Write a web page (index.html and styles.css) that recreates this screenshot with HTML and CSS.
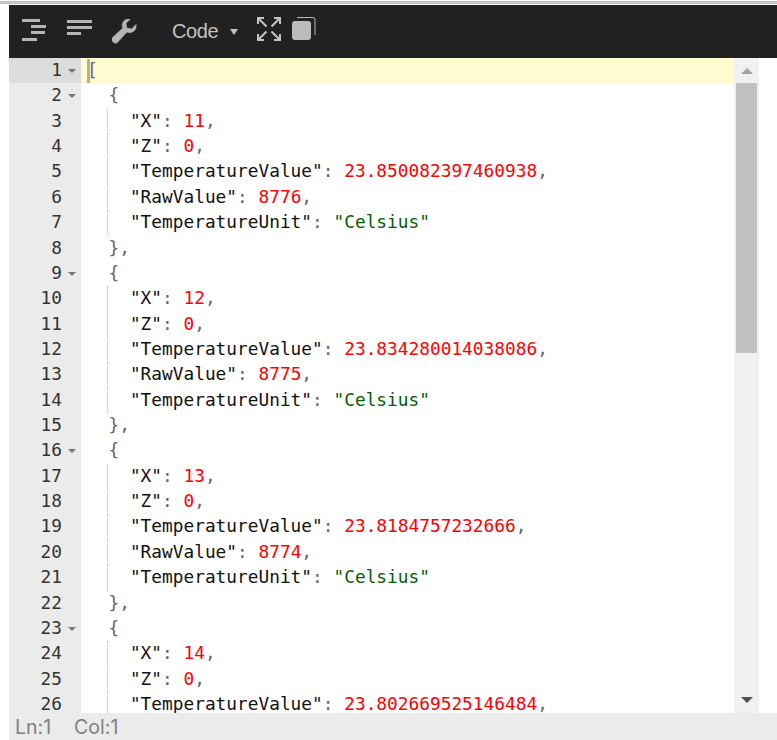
FILE: index.html
```html
<!DOCTYPE html>
<html lang="en">
<head>
    <meta charset="UTF-8">
    <title>JSON Editor</title>
    <link rel="stylesheet" href="styles.css">
</head>
<body>
    <div class="top-rule"></div>

    <div class="json-editor">
        <!-- Toolbar -->
        <div class="toolbar">
            <svg class="tool-icon" width="26" height="24" viewBox="0 0 26 24">
                <rect x="0" y="0" width="18" height="3" fill="#b5b5b5"/>
                <rect x="9" y="6" width="15" height="3" fill="#b5b5b5"/>
                <rect x="9" y="12" width="14" height="3" fill="#b5b5b5"/>
                <rect x="0" y="19" width="15" height="3" fill="#b5b5b5"/>
            </svg>
            <svg class="tool-icon" width="26" height="24" viewBox="0 0 26 24">
                <rect x="0" y="1" width="25" height="3" fill="#b5b5b5"/>
                <rect x="0" y="7" width="25" height="3" fill="#b5b5b5"/>
                <rect x="0" y="13" width="14" height="3" fill="#b5b5b5"/>
            </svg>
            <svg class="tool-icon" width="25" height="25" viewBox="1 1 25 25">
                <path d="M25 6.500c.6 3-.6 6-3.400 7.400-1.900.9-3.800.9-5.600.1L6.300 24.600c-1 1-2.600 1-3.600 0l-1.300-1.300c-1-1-1-2.600 0-3.600L11.800 10c-.8-1.800-.8-3.800.1-5.600C13.300 1.600 16.300.4 19.300 1l-4.300 4.400.9 4.700 4.700.9z" fill="#b5b5b5" stroke="#b5b5b5" stroke-width="0.6"/>
            </svg>
            <div class="mode-btn">Code <span class="caret"></span></div>
            <svg class="expand-icon" width="24" height="24" viewBox="0 0 24 24" fill="none" stroke="#c4c4c4" stroke-width="2">
                <path d="M1 7V1h6M17 1h6v6M1 17v6h6M23 17v6h-6"/>
                <path d="M2 2l7.500 7.500M22 2l-7.500 7.500M2 22l7.500-7.500M22 22l-7.500-7.500"/>
            </svg>
            <svg class="copy-icon" width="24" height="24" viewBox="0 0 24 24">
                <path d="M5 .5h16a2 2 0 0 1 2 2V18" fill="none" stroke="#b5b5b5" stroke-width="1"/>
                <rect x="0" y="4" width="19" height="19" rx="3" fill="#bbb"/>
            </svg>
        </div>

        <!-- Editor -->
        <div class="editor-body">
            <div class="gutter">
                <div class="gutter-line active">1<span class="fold"></span></div>
                <div class="gutter-line">2<span class="fold"></span></div>
                <div class="gutter-line">3</div>
                <div class="gutter-line">4</div>
                <div class="gutter-line">5</div>
                <div class="gutter-line">6</div>
                <div class="gutter-line">7</div>
                <div class="gutter-line">8</div>
                <div class="gutter-line">9<span class="fold"></span></div>
                <div class="gutter-line">10</div>
                <div class="gutter-line">11</div>
                <div class="gutter-line">12</div>
                <div class="gutter-line">13</div>
                <div class="gutter-line">14</div>
                <div class="gutter-line">15</div>
                <div class="gutter-line">16<span class="fold"></span></div>
                <div class="gutter-line">17</div>
                <div class="gutter-line">18</div>
                <div class="gutter-line">19</div>
                <div class="gutter-line">20</div>
                <div class="gutter-line">21</div>
                <div class="gutter-line">22</div>
                <div class="gutter-line">23<span class="fold"></span></div>
                <div class="gutter-line">24</div>
                <div class="gutter-line">25</div>
                <div class="gutter-line">26</div>
            </div>

            <div class="code">
                <div class="line active"><span class="cursor"></span><span class="pun">[</span></div>
                <div class="line">  <span class="pun">{</span></div>
                <div class="line"><span class="ind"></span>    <span class="key">"X"</span><span class="pun">:</span> <span class="num">11</span><span class="pun">,</span></div>
                <div class="line"><span class="ind"></span>    <span class="key">"Z"</span><span class="pun">:</span> <span class="num">0</span><span class="pun">,</span></div>
                <div class="line"><span class="ind"></span>    <span class="key">"TemperatureValue"</span><span class="pun">:</span> <span class="num">23.850082397460938</span><span class="pun">,</span></div>
                <div class="line"><span class="ind"></span>    <span class="key">"RawValue"</span><span class="pun">:</span> <span class="num">8776</span><span class="pun">,</span></div>
                <div class="line"><span class="ind"></span>    <span class="key">"TemperatureUnit"</span><span class="pun">:</span> <span class="str">"Celsius"</span></div>
                <div class="line">  <span class="pun">},</span></div>
                <div class="line">  <span class="pun">{</span></div>
                <div class="line"><span class="ind"></span>    <span class="key">"X"</span><span class="pun">:</span> <span class="num">12</span><span class="pun">,</span></div>
                <div class="line"><span class="ind"></span>    <span class="key">"Z"</span><span class="pun">:</span> <span class="num">0</span><span class="pun">,</span></div>
                <div class="line"><span class="ind"></span>    <span class="key">"TemperatureValue"</span><span class="pun">:</span> <span class="num">23.834280014038086</span><span class="pun">,</span></div>
                <div class="line"><span class="ind"></span>    <span class="key">"RawValue"</span><span class="pun">:</span> <span class="num">8775</span><span class="pun">,</span></div>
                <div class="line"><span class="ind"></span>    <span class="key">"TemperatureUnit"</span><span class="pun">:</span> <span class="str">"Celsius"</span></div>
                <div class="line">  <span class="pun">},</span></div>
                <div class="line">  <span class="pun">{</span></div>
                <div class="line"><span class="ind"></span>    <span class="key">"X"</span><span class="pun">:</span> <span class="num">13</span><span class="pun">,</span></div>
                <div class="line"><span class="ind"></span>    <span class="key">"Z"</span><span class="pun">:</span> <span class="num">0</span><span class="pun">,</span></div>
                <div class="line"><span class="ind"></span>    <span class="key">"TemperatureValue"</span><span class="pun">:</span> <span class="num">23.8184757232666</span><span class="pun">,</span></div>
                <div class="line"><span class="ind"></span>    <span class="key">"RawValue"</span><span class="pun">:</span> <span class="num">8774</span><span class="pun">,</span></div>
                <div class="line"><span class="ind"></span>    <span class="key">"TemperatureUnit"</span><span class="pun">:</span> <span class="str">"Celsius"</span></div>
                <div class="line">  <span class="pun">},</span></div>
                <div class="line">  <span class="pun">{</span></div>
                <div class="line"><span class="ind"></span>    <span class="key">"X"</span><span class="pun">:</span> <span class="num">14</span><span class="pun">,</span></div>
                <div class="line"><span class="ind"></span>    <span class="key">"Z"</span><span class="pun">:</span> <span class="num">0</span><span class="pun">,</span></div>
                <div class="line"><span class="ind"></span>    <span class="key">"TemperatureValue"</span><span class="pun">:</span> <span class="num">23.802669525146484</span><span class="pun">,</span></div>
            </div>

            <div class="scrollbar">
                <div class="arrow-up"></div>
                <div class="thumb"></div>
                <div class="arrow-down"></div>
            </div>
        </div>
    </div>

    <!-- Status bar -->
    <div class="status-bar">
        <span>Ln:1</span>
        <span>Col:1</span>
    </div>
</body>
</html>
```

FILE: styles.css
```css
/* General Styling */
html, body {
    margin: 0;
    height: 740px;
    overflow: hidden;
    background-color: #fff;
}

.top-rule {
    height: 3px;
    margin-top: 1px;
    background-color: #c4c4c4;
}

.json-editor {
    margin: 1px 0 0 9px;
}

/* Toolbar Styling */
.toolbar {
    height: 53px;
    box-sizing: border-box;
    padding-left: 13px;
    display: flex;
    align-items: center;
    background-color: #212121;
}

.tool-icon {
    margin-right: 19px;
    margin-bottom: 1px;
    flex: none;
}

.mode-btn {
    margin-left: 16px;
    margin-right: 19px;
    display: flex;
    align-items: center;
    font-family: "Liberation Sans", Arial, sans-serif;
    font-size: 20px;
    letter-spacing: -0.4px;
    color: #c4c4c4;
}

.caret {
    margin-left: 12px;
    width: 0;
    height: 0;
    border-left: 4px solid transparent;
    border-right: 4px solid transparent;
    border-top: 6px solid #c4c4c4;
}

.expand-icon {
    margin-right: 11px;
    margin-bottom: 5px;
}

.copy-icon {
    margin-bottom: 5px;
}

/* Editor Styling */
.editor-body {
    height: 655px;
    display: flex;
    overflow: hidden;
    font-family: "DejaVu Sans Mono", monospace;
    font-size: 17.75px;
    letter-spacing: 0.03px;
    line-height: 25.36px;
}

.gutter {
    width: 72px;
    flex: none;
    background-color: #ebebeb;
    color: #333;
}

.gutter-line {
    height: 25.36px;
    padding-right: 19px;
    text-align: right;
    position: relative;
}

.gutter-line.active {
    background-color: #dcdcdc;
}

.fold {
    position: absolute;
    right: 5px;
    top: 11px;
    width: 0;
    height: 0;
    border-left: 4px solid transparent;
    border-right: 4px solid transparent;
    border-top: 4px solid #777;
}

.code {
    width: 653px;
    flex: none;
    overflow: hidden;
}

.line {
    height: 25.36px;
    padding-left: 6px;
    color: #000;
    white-space: pre;
}

.line.active {
    background-color: #fffbd1;
    position: relative;
}

.cursor {
    position: absolute;
    left: 6px;
    top: 1px;
    height: 24px;
    width: 3px;
    background-color: #b5ae98;
}

.ind {
    display: inline-block;
    width: 21px;
    height: 25.36px;
    margin-right: -21px;
    vertical-align: top;
    box-sizing: border-box;
    border-right: 1px dotted #c4c4c4;
}

.pun {
    color: #666;
}

.key {
    color: #111;
}

.num {
    color: #f00;
}

.str {
    color: #006000;
}

/* Scrollbar Styling */
.scrollbar {
    width: 25px;
    flex: none;
    box-sizing: border-box;
    padding: 0 2px;
    background-color: #f1f1f1;
    display: flex;
    flex-direction: column;
    align-items: center;
}

.arrow-up {
    margin-top: 10px;
    margin-bottom: 9px;
    width: 0;
    height: 0;
    border-left: 6px solid transparent;
    border-right: 6px solid transparent;
    border-bottom: 6px solid #a3a3a3;
}

.thumb {
    width: 21px;
    height: 270px;
    background-color: #c1c1c1;
}

.arrow-down {
    margin-top: auto;
    margin-bottom: 10px;
    width: 0;
    height: 0;
    border-left: 6px solid transparent;
    border-right: 6px solid transparent;
    border-top: 6px solid #505050;
}

/* Status Bar Styling */
.status-bar {
    height: 27px;
    margin-left: 9px;
    padding-left: 6px;
    display: flex;
    gap: 23px;
    align-items: center;
    background-color: #ebebeb;
    font-family: "Inter", sans-serif;
    font-size: 19.5px;
    color: #808080;
}
```
